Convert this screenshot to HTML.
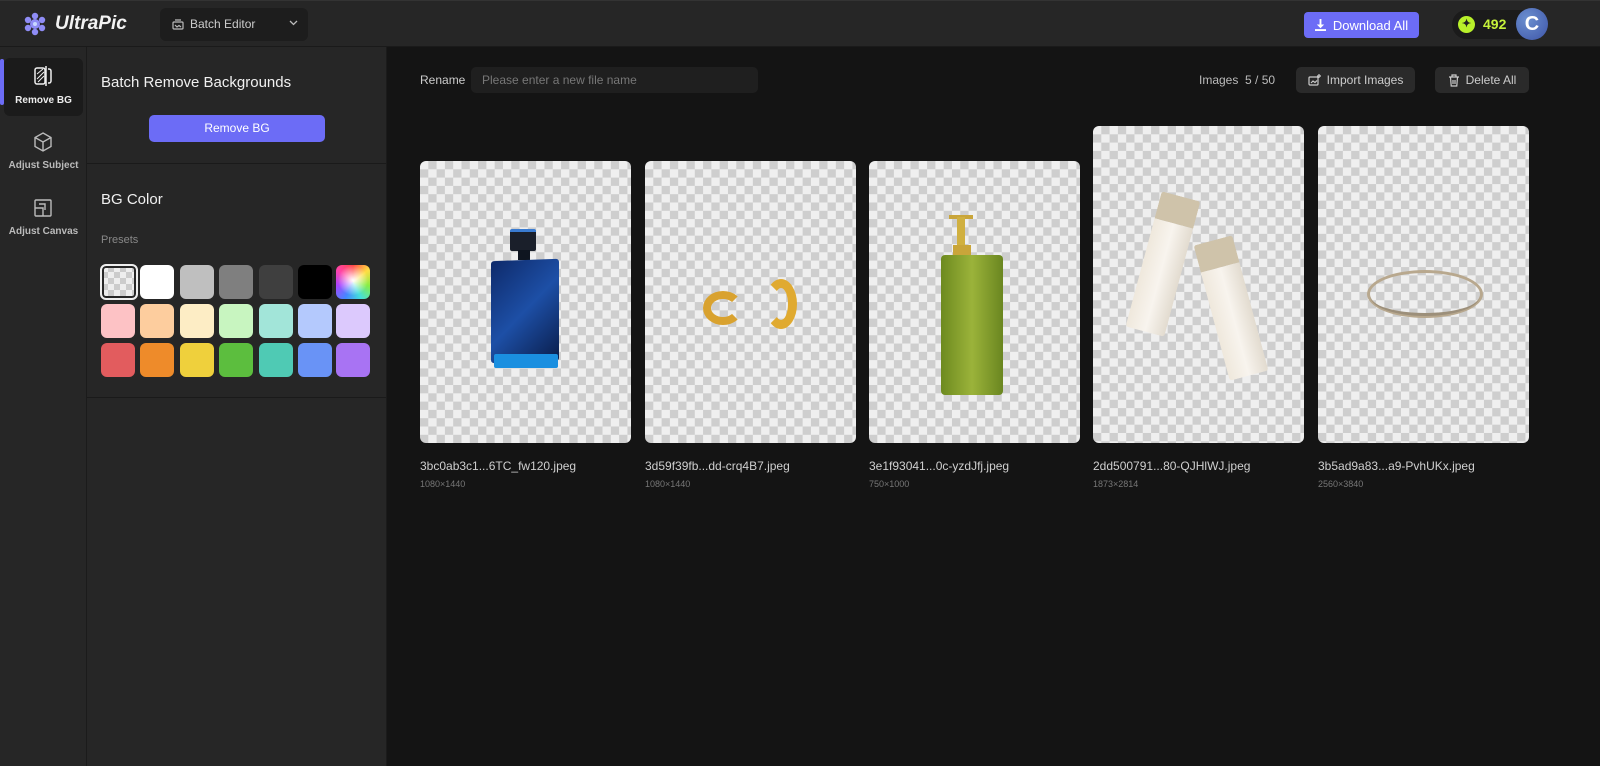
<!DOCTYPE html>
<html><head><meta charset="utf-8"><style>
*{box-sizing:border-box;margin:0;padding:0}
body{width:1600px;height:766px;overflow:hidden;background:#141414;font-family:"Liberation Sans",sans-serif;color:#ddd;position:relative}
.top{position:absolute;left:0;top:0;width:1600px;height:47px;background:#262626;border-bottom:1px solid #1a1a1a;border-top:1px solid #333}
.rail{position:absolute;left:0;top:47px;width:87px;height:719px;background:#262626;border-right:1px solid #1b1b1b}
.panel{position:absolute;left:87px;top:47px;width:300px;height:719px;background:#262626;border-right:1px solid #1b1b1b}
.ab{position:absolute}
.chk{background-color:#efefef;background-image:conic-gradient(#cecece 25%,transparent 0 50%,#cecece 0 75%,transparent 0);background-size:16.6px 16.6px;border-radius:6px;overflow:hidden}
.sw{position:absolute;width:34px;height:34px;border-radius:6px}
.fn{position:absolute;font-size:12px;color:#cfcfcf}
.dm{position:absolute;font-size:9px;color:#777}
.btn{position:absolute;background:#2a2a2a;border-radius:5px;font-size:12px;color:#ccc;display:flex;align-items:center;justify-content:center;gap:6px}
</style></head><body>
<div class="top">
 <svg class="ab" style="left:23px;top:11px" width="24" height="24" viewBox="0 0 24 24"><g fill="#8f8cf5"><circle cx="12" cy="12" r="5"/><circle cx="12" cy="4" r="3.2"/><circle cx="12" cy="20" r="3.2"/><circle cx="5" cy="8" r="3.2"/><circle cx="19" cy="8" r="3.2"/><circle cx="5" cy="16" r="3.2"/><circle cx="19" cy="16" r="3.2"/></g><circle cx="12" cy="12" r="2" fill="#c8d8ff"/></svg>
 <div class="ab" style="left:55px;top:12px;font-size:19px;font-weight:bold;font-style:italic;color:#f2f2f2">UltraPic</div>
 <div class="ab" style="left:160px;top:7px;width:148px;height:33px;background:#1d1d1d;border-radius:6px"></div>
 <svg class="ab" style="left:172px;top:17px" width="12" height="12" viewBox="0 0 12 12" fill="none" stroke="#bbb" stroke-width="1.2"><rect x="1" y="4" width="10" height="7" rx="1"/><path d="M3 2h6M3 7l2 2 2-1.5 2 1.5"/></svg>
 <div class="ab" style="left:190px;top:16px;font-size:12px;color:#ccc">Batch Editor</div>
 <svg class="ab" style="left:289px;top:19px" width="9" height="6" viewBox="0 0 9 6" fill="none" stroke="#bbb" stroke-width="1.3"><path d="M1 1l3.5 3.5L8 1"/></svg>
 <div class="ab" style="left:1304px;top:11px;width:115px;height:26px;background:#6c6cf6;border-radius:4px;color:#fff;font-size:13px;display:flex;align-items:center;justify-content:center;gap:7px"><svg width="11" height="12" viewBox="0 0 12 13" fill="#fff"><path d="M5 0h2v6h3l-4 4-4-4h3zM0 11h12v2H0z"/></svg>Download All</div>
 <div class="ab" style="left:1452px;top:9px;width:95px;height:29px;background:#1b1b1b;border-radius:15px"></div>
 <div class="ab" style="left:1458px;top:15px;width:17px;height:17px;border-radius:50%;background:#b8f02a;color:#222;font-size:11px;text-align:center;line-height:17px;font-weight:bold">✦</div>
 <div class="ab" style="left:1483px;top:15px;font-size:14px;font-weight:bold;color:#c6f23a">492</div>
 <div class="ab" style="left:1516px;top:7px;width:32px;height:32px;border-radius:50%;background:radial-gradient(circle at 35% 35%,#6b8fcf,#3e55a8);color:#fff;font-size:20px;text-align:center;line-height:32px;font-weight:bold">C</div>
</div>
<div class="rail">
 <div class="ab" style="left:0;top:12px;width:4px;height:46px;background:#6c6cf6;border-radius:2px"></div>
 <div class="ab" style="left:4px;top:11px;width:79px;height:58px;background:#1b1b1b;border-radius:6px"></div>
 <svg class="ab" style="left:33px;top:18px" width="20" height="22" viewBox="0 0 20 22" fill="none" stroke="#eee" stroke-width="1.5"><rect x="2" y="3" width="10" height="16" rx="2"/><path d="M4 9l6-5M4 14l7-7M5 17l6-6" stroke-width="1"/><path d="M13 1v20" /><path d="M15 4h1a2 2 0 012 2v10a2 2 0 01-2 2h-1"/></svg>
 <div class="ab" style="left:0;top:48px;width:87px;text-align:center;font-size:10px;font-weight:bold;color:#eee">Remove BG</div>
 <svg class="ab" style="left:33px;top:85px" width="20" height="20" viewBox="0 0 20 20" fill="none" stroke="#bbb" stroke-width="1.4"><path d="M10 1l8 4.5v9L10 19l-8-4.5v-9zM2 5.5l8 4.5 8-4.5M10 10v9"/></svg>
 <div class="ab" style="left:0;top:113px;width:87px;text-align:center;font-size:10px;font-weight:bold;color:#bbb">Adjust Subject</div>
 <svg class="ab" style="left:33px;top:151px" width="20" height="20" viewBox="0 0 20 20" fill="none" stroke="#bbb" stroke-width="1.4"><rect x="2" y="2" width="16" height="16" rx="1"/><path d="M2 10h8v8M6 6h6v6" /></svg>
 <div class="ab" style="left:0;top:179px;width:87px;text-align:center;font-size:10px;font-weight:bold;color:#bbb">Adjust Canvas</div>
</div>
<div class="panel">
 <div class="ab" style="left:14px;top:27px;font-size:15px;color:#f0f0f0">Batch Remove Backgrounds</div>
 <div class="ab" style="left:62px;top:68px;width:176px;height:27px;background:#6c6cf6;border-radius:5px;color:#fff;font-size:12px;text-align:center;line-height:27px">Remove BG</div>
 <div class="ab" style="left:0;top:116px;width:299px;height:1px;background:#1a1a1a"></div>
 <div class="ab" style="left:14px;top:144px;font-size:15px;color:#f0f0f0">BG Color</div>
 <div class="ab" style="left:14px;top:187px;font-size:11px;color:#888">Presets</div>
 <div class="ab" style="left:0;top:350px;width:299px;height:1px;background:#1a1a1a"></div>
</div>
<div class="sw" style="left:100px;top:264px;width:38px;height:36px;border:2px solid #eee;background-color:#eee;background-image:conic-gradient(#ccc 25%,transparent 0 50%,#ccc 0 75%,transparent 0);background-size:12px 12px;box-shadow:inset 0 0 0 2px #262626"></div>
<div class="sw" style="left:140px;top:265px;background:#fff"></div>
<div class="sw" style="left:180px;top:265px;background:#bfbfbf"></div>
<div class="sw" style="left:219px;top:265px;background:#7f7f7f"></div>
<div class="sw" style="left:259px;top:265px;background:#3f3f3f"></div>
<div class="sw" style="left:298px;top:265px;background:#000"></div>
<div class="sw" style="left:336px;top:265px;background:radial-gradient(circle at 50% 45%,#fff 0,transparent 60%),conic-gradient(#f44,#fd4,#8e4,#4dd,#48f,#a4f,#f4a,#f44)"></div>
<div class="sw" style="left:101px;top:304px;background:#fdc2c5"></div>
<div class="sw" style="left:140px;top:304px;background:#fdcd9e"></div>
<div class="sw" style="left:180px;top:304px;background:#fdedc5"></div>
<div class="sw" style="left:219px;top:304px;background:#c8f5c0"></div>
<div class="sw" style="left:259px;top:304px;background:#a2e5d9"></div>
<div class="sw" style="left:298px;top:304px;background:#b4c9fd"></div>
<div class="sw" style="left:336px;top:304px;background:#dcc9fd"></div>
<div class="sw" style="left:101px;top:343px;background:#e25c5e"></div>
<div class="sw" style="left:140px;top:343px;background:#ee8b2a"></div>
<div class="sw" style="left:180px;top:343px;background:#efd03c"></div>
<div class="sw" style="left:219px;top:343px;background:#5cbe3e"></div>
<div class="sw" style="left:259px;top:343px;background:#4fcab4"></div>
<div class="sw" style="left:298px;top:343px;background:#6993f6"></div>
<div class="sw" style="left:336px;top:343px;background:#a873f3"></div>
<div class="ab" style="left:420px;top:73px;font-size:12px;color:#ccc">Rename</div>
<div class="ab" style="left:471px;top:67px;width:287px;height:26px;background:#1f1f1f;border-radius:5px;font-size:12px;color:#777;padding:6px 11px">Please enter a new file name</div>
<div class="ab" style="left:1199px;top:73px;font-size:12px;color:#bbb">Images&nbsp;&nbsp;5 / 50</div>
<div class="btn" style="left:1296px;top:67px;width:119px;height:26px"><svg width="13" height="13" viewBox="0 0 13 13" fill="none" stroke="#ccc" stroke-width="1.2"><rect x="1" y="3" width="9" height="8" rx="1"/><path d="M3 9l2-2 2 1.5 2-2M11 0v4M9 2h4"/></svg>Import Images</div>
<div class="btn" style="left:1435px;top:67px;width:94px;height:26px"><svg width="12" height="13" viewBox="0 0 12 13" fill="none" stroke="#ccc" stroke-width="1.2"><path d="M1 3h10M4 3V1h4v2M2.5 3l.7 9h5.6l.7-9M5 6v4M7 6v4"/></svg>Delete All</div>
<div class="ab chk" style="left:420px;top:161px;width:211px;height:282px">
 <div class="ab" style="left:90px;top:68px;width:26px;height:22px;background:#1a1f2a;border-radius:2px;border-top:3px solid #3a7bd0"></div>
 <div class="ab" style="left:98px;top:89px;width:12px;height:10px;background:#0f1520"></div>
 <div class="ab" style="left:71px;top:99px;width:68px;height:102px;background:linear-gradient(135deg,#0e2a6a,#1d4fa6 50%,#0a1d4a);border-radius:3px;transform:skewY(-2deg)"></div>
 <div class="ab" style="left:74px;top:193px;width:64px;height:14px;background:#1a8fe0;border-radius:2px"></div>
</div>
<div class="ab chk" style="left:645px;top:161px;width:211px;height:282px">
 <div class="ab" style="left:58px;top:130px;width:40px;height:34px;border:8px solid #d9a22f;border-radius:50%;border-right-color:transparent"></div>
 <div class="ab" style="left:120px;top:118px;width:32px;height:50px;border:9px solid #e0aa30;border-radius:50%;border-left-color:transparent"></div>
</div>
<div class="ab chk" style="left:869px;top:161px;width:211px;height:282px">
 <div class="ab" style="left:80px;top:54px;width:24px;height:4px;background:#c9a53a"></div>
 <div class="ab" style="left:88px;top:56px;width:8px;height:30px;background:#d0b040"></div>
 <div class="ab" style="left:84px;top:84px;width:18px;height:12px;background:#c9a53a"></div>
 <div class="ab" style="left:72px;top:94px;width:62px;height:140px;background:linear-gradient(90deg,#6d8a1f,#9bb33a 50%,#6a8620);border-radius:4px"></div>
</div>
<div class="ab chk" style="left:1093px;top:126px;width:211px;height:317px">
 <div class="ab" style="left:50px;top:68px;width:40px;height:140px;background:linear-gradient(90deg,#efe8dc,#f8f4ee,#e2dbcf);transform:rotate(15deg);border-radius:3px;border-top:28px solid #cfc3aa"></div>
 <div class="ab" style="left:118px;top:112px;width:40px;height:140px;background:linear-gradient(90deg,#efe8dc,#f8f4ee,#e2dbcf);transform:rotate(-15deg);border-radius:3px;border-top:28px solid #cfc3aa"></div>
</div>
<div class="ab chk" style="left:1318px;top:126px;width:211px;height:317px">
 <div class="ab" style="left:49px;top:144px;width:116px;height:48px;border:3px solid #b8a88e;border-radius:50%"></div>
 <div class="ab" style="left:52px;top:150px;width:110px;height:40px;border-bottom:3px solid #9c8f7a;border-radius:50%"></div>
</div>
<div class="fn" style="left:420px;top:459px">3bc0ab3c1...6TC_fw120.jpeg</div><div class="dm" style="left:420px;top:479px">1080×1440</div>
<div class="fn" style="left:645px;top:459px">3d59f39fb...dd-crq4B7.jpeg</div><div class="dm" style="left:645px;top:479px">1080×1440</div>
<div class="fn" style="left:869px;top:459px">3e1f93041...0c-yzdJfj.jpeg</div><div class="dm" style="left:869px;top:479px">750×1000</div>
<div class="fn" style="left:1093px;top:459px">2dd500791...80-QJHlWJ.jpeg</div><div class="dm" style="left:1093px;top:479px">1873×2814</div>
<div class="fn" style="left:1318px;top:459px">3b5ad9a83...a9-PvhUKx.jpeg</div><div class="dm" style="left:1318px;top:479px">2560×3840</div>
</body></html>
